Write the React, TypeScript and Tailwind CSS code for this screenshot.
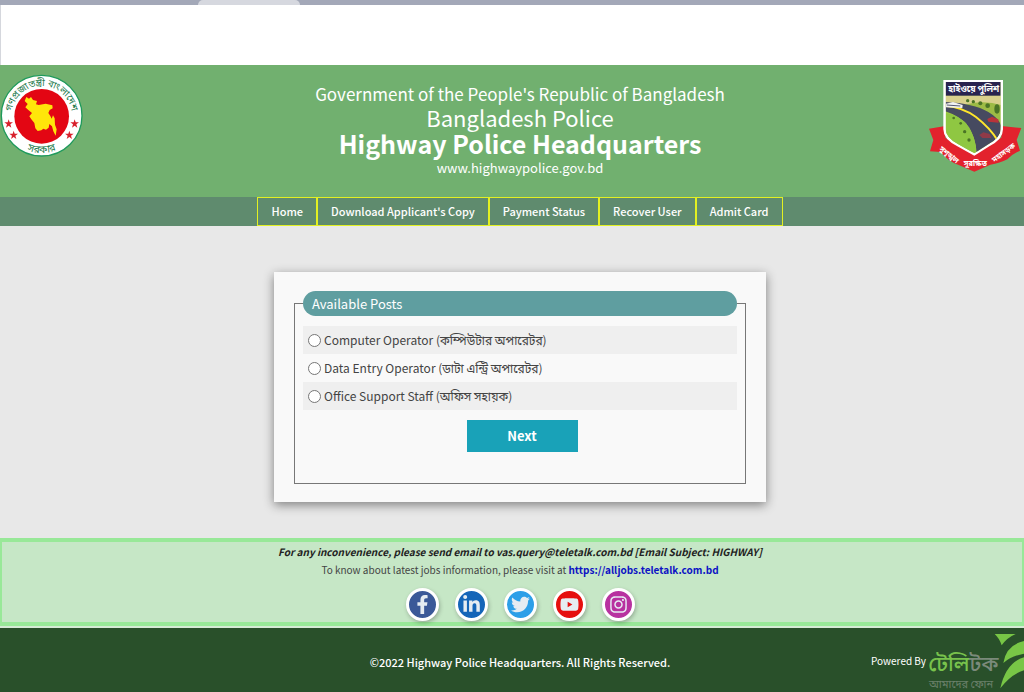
import { FaFacebookF, FaInstagram, FaLinkedinIn, FaTwitter, FaYoutube } from 'react-icons/fa';

const navLinks = ['Home', "Download Applicant's Copy", 'Payment Status', 'Recover User', 'Admit Card'];

const posts = [
  { id: 'computer', label: 'Computer Operator (কম্পিউটার অপারেটর)' },
  { id: 'data-entry', label: 'Data Entry Operator (ডাটা এন্ট্রি অপারেটর)' },
  { id: 'support', label: 'Office Support Staff (অফিস সহায়ক)' },
];

const socials = [
  { name: 'Facebook', icon: FaFacebookF, color: 'bg-[#3b5998]' },
  { name: 'LinkedIn', icon: FaLinkedinIn, color: 'bg-[#1565b8]' },
  { name: 'Twitter', icon: FaTwitter, color: 'bg-[#2d9fe8]' },
  { name: 'YouTube', icon: FaYoutube, color: 'bg-[#e60f0f]' },
  { name: 'Instagram', icon: FaInstagram, color: 'bg-[#b832a0]' },
];

const star = 'M0 -13 L3 -4 L13 -4 L5 2 L8 12 L0 6 L-8 12 L-5 2 L-13 -4 L-3 -4 Z';

function GovtSeal() {
  return (
    <svg viewBox="0 0 270 300" className="h-[100px] w-[90px] overflow-visible" role="img" aria-label="Government seal">
      <defs>
        <path id="seal-top" d="M37 174 A91 91 0 1 1 213 174" />
        <path id="seal-bottom" d="M14 150 A111 111 0 0 0 236 150" />
      </defs>
      <circle cx="125" cy="149" r="121" fill="#fff" stroke="#1f9a5c" strokeWidth="4" />
      <circle cx="125" cy="151" r="82" fill="#e30613" />
      <path
        fill="#ffe60a"
        d="M79 93 L87 98 L93 93 L99 102 L111 105 L108 115 L116 117 L137 113 L157 118 L158 127 L149 132 L145 141 L151 150 L155 158 L159 148 L164 157 L165 176 L170 190 L167 209 L160 196 L156 181 L148 174 L146 185 L138 191 L130 188 L124 193 L113 195 L106 187 L103 171 L94 160 L88 151 L96 141 L85 132 L76 124 L83 114 L74 105 Z"
      />
      <g fill="#d8202c">
        <path d={star} transform="translate(26 173)" />
        <path d={star} transform="translate(41 207)" />
        <path d={star} transform="translate(224 173)" />
        <path d={star} transform="translate(208 207)" />
      </g>
      <g fill="#237a4c" textAnchor="middle">
        <text fontSize="29">
          <textPath href="#seal-top" startOffset="50%">গণপ্রজাতন্ত্রী বাংলাদেশ</textPath>
        </text>
        <text fontSize="31">
          <textPath href="#seal-bottom" startOffset="50%">সরকার</textPath>
        </text>
      </g>
    </svg>
  );
}

function HighwayCrest() {
  return (
    <svg viewBox="0 0 312 360" className="h-[120px] w-[104px]" role="img" aria-label="Highway Police crest">
      <defs>
        <clipPath id="shield">
          <path d="M77 48 H242 V190 Q242 215 205 235 L163 262 L115 235 Q77 215 77 190 Z" />
        </clipPath>
      </defs>
      <path d="M27 188 L76 180 V215 L163 262 L244 215 V180 L304 186 L290 222 L300 254 Q280 262 262 280 Q240 292 211 296 L163 317 L116 297 Q84 286 62 258 L30 256 L40 222 Z" fill="#e3222d" />
      <path d="M70 42 H249 V190 Q249 220 208 241 L163 269 L112 241 Q70 220 70 190 Z" fill="#fff" />
      <g clipPath="url(#shield)">
        <rect x="70" y="42" width="180" height="230" fill="#9dc843" />
        <rect x="70" y="88" width="180" height="40" fill="#d9d08c" />
        <path d="M76 138 Q170 92 246 118 V190 L205 140 Z" fill="#9dbb45" />
        <path d="M76 108 Q160 112 205 138 Q246 162 246 195 L200 262 L170 262 Q168 210 138 172 Q112 148 76 136 Z" fill="#464a60" />
        <path d="M76 142 Q120 145 147 184 Q168 220 168 260 L120 250 L76 220 Z" fill="#8fc742" />
        <path d="M76 119 Q130 124 168 153 Q210 186 232 222" fill="none" stroke="#ffe62b" strokeWidth="6" />
        <path d="M78 113 L99 108 L128 117 L127 126 L78 124 Z" fill="#f2f2f2" />
        <path d="M80 117 L121 120" stroke="#555a70" strokeWidth="3" />
        <path d="M202 159 L216 152 L235 160 L236 170 L205 167 Z" fill="#b8333a" />
        <path d="M178 207 L190 199 L209 204 L214 216 L187 216 Z" fill="#913a48" />
        <g fill="#4b7426">
          <circle cx="143" cy="104" r="5" />
          <circle cx="160" cy="107" r="5" />
          <circle cx="181" cy="112" r="6" />
          <circle cx="203" cy="119" r="7" />
          <ellipse cx="231" cy="129" rx="8" ry="14" />
          <circle cx="101" cy="156" r="4" />
          <circle cx="122" cy="172" r="4" />
          <circle cx="134" cy="197" r="5" />
          <circle cx="147" cy="222" r="5" />
        </g>
        <rect x="70" y="42" width="180" height="47" fill="#29234f" />
      </g>
      <g fill="#fff" fontWeight="700" textAnchor="middle">
        <text x="161" y="77" fontSize="26">হাইওয়ে পুলিশ</text>
        <g fontSize="22">
          <text transform="translate(83 272) rotate(38)">সুশৃঙ্খল</text>
          <text x="166" y="299">সুরক্ষিত</text>
          <text transform="translate(255 266) rotate(-36)">মহাসড়ক</text>
        </g>
      </g>
    </svg>
  );
}

function TeletalkLogo() {
  return (
    <svg viewBox="198 24 294 192" className="h-16 w-[98px]" role="img" aria-label="Teletalk">
      <text x="205" y="152" fontSize="64" fontWeight="500" fill="#78c24c">
        টেলি<tspan fill="#7b8a7b">টক</tspan>
      </text>
      <text x="207" y="204" fontSize="33" fill="#6b806b">আমাদের ফোন</text>
      <g fill="#78c646">
        <path d="M404 42 H467 Q441 53 425 76 Q419 56 404 42 Z" />
        <path d="M492 63 Q438 75 430 129 Q454 108 492 101 Z" />
        <path d="M492 112 Q438 128 421 205 Q453 163 492 151 Z" />
      </g>
    </svg>
  );
}

export default function App() {
  return (
    <div className="flex min-h-screen flex-col bg-[#e8e8e8] font-['Noto_Sans_CJK_SC','Noto_Sans_Bengali',sans-serif] text-[#444]">
      {/* Browser strip */}
      <div className="h-[5px] bg-[#a3a8b8] pl-[198px]">
        <div className="h-full w-[102px] rounded-t-lg bg-[#d6d8df]" />
      </div>
      <div className="h-[60px] border-l border-[#d5d7dd] bg-white" />

      {/* Header */}
      <header className="flex h-[132px] items-start bg-[#71b06f] pt-px">
        <div className="w-[120px]">
          <GovtSeal />
        </div>
        <div className="flex-1 pt-[18px] text-center text-white">
          <p className="text-[17px] leading-5">Government of the People's Republic of Bangladesh</p>
          <p className="text-[22px] leading-[26px]">Bangladesh Police</p>
          <h1 className="text-[25px] leading-[26px] font-bold">Highway Police Headquarters</h1>
          <p className="text-[13px] leading-6">www.highwaypolice.gov.bd</p>
        </div>
        <HighwayCrest />
      </header>

      {/* Navigation */}
      <nav className="flex justify-center bg-[#5f8b6e] pl-4">
        {navLinks.map((link) => (
          <a key={link} href="#" className="border border-[#e2f022] px-[13px] text-[11px] leading-[27px] font-medium text-white">
            {link}
          </a>
        ))}
      </nav>

      {/* Posts form */}
      <main className="flex flex-1 items-start justify-center pt-[46px] pb-9 pl-4">
        <form className="w-[492px] bg-[#f9f9f9] px-5 pt-[19px] pb-[18px] shadow-[0_3px_10px_rgba(0,0,0,0.45)]">
          <fieldset className="h-[193px] border border-[#777] px-2">
            <legend className="h-[25px] w-full rounded-full bg-[#5f9ea0] px-[9px] text-[13px] leading-[25px] text-white">
              Available Posts
            </legend>
            <div className="pt-[10px]">
              {posts.map((post) => (
                <label key={post.id} className="flex h-7 items-center gap-[3px] px-[5px] text-[12px] odd:bg-[#efefef]">
                  <input
                    type="radio"
                    name="post"
                    value={post.id}
                    className="size-[13px] appearance-none rounded-full border border-[#767676] bg-white checked:border-4 checked:border-[#1a73e8]"
                  />
                  {post.label}
                </label>
              ))}
            </div>
            <div className="flex justify-center pt-[10px] pl-1">
              <button type="button" className="h-8 w-[111px] bg-[#19a2b8] text-[13px] font-bold text-white">
                Next
              </button>
            </div>
          </fieldset>
        </form>
      </main>

      {/* Contact */}
      <section className="h-[88px] border-4 border-x-2 border-[#98e898] bg-[#c6e7c6] pl-4 text-center">
        <p className="text-[10px] leading-[19px] font-bold text-[#222] italic">
          For any inconvenience, please send email to vas.query@teletalk.com.bd [Email Subject: HIGHWAY]
        </p>
        <p className="text-[10px] leading-[18px]">
          To know about latest jobs information, please visit at{' '}
          <a href="https://alljobs.teletalk.com.bd" className="font-bold text-[#0d12c4]">
            https://alljobs.teletalk.com.bd
          </a>
        </p>
        <div className="flex justify-center gap-4 pt-[9px]">
          {socials.map(({ name, icon: Icon, color }) => (
            <a
              key={name}
              href="#"
              aria-label={name}
              className={`flex size-[33px] items-center justify-center rounded-full border-3 border-white text-[#e6ecf2] shadow-[1px_2px_4px_rgba(0,0,0,0.25)] ${color}`}
            >
              <Icon className="size-[19px]" />
            </a>
          ))}
        </div>
      </section>

      {/* Footer */}
      <footer className="grid grid-cols-[1fr_auto_1fr] items-center border-t-2 border-[#d5ead5] bg-[#29502a] pl-4 text-white">
        <p className="col-start-2 pt-1 text-[11px] font-medium">©2022 Highway Police Headquarters. All Rights Reserved.</p>
        <div className="flex items-center justify-end text-[10px]">
          <span>Powered By</span>
          <TeletalkLogo />
        </div>
      </footer>
    </div>
  );
}
